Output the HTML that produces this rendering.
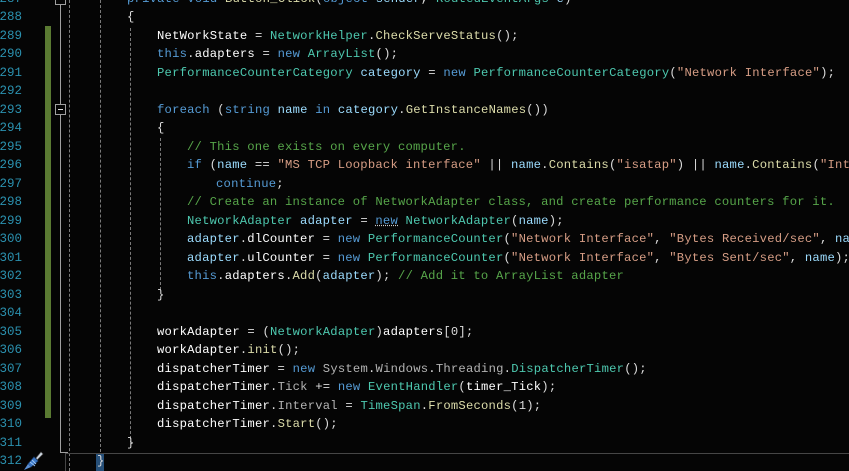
<!DOCTYPE html>
<html><head><meta charset="utf-8"><style>
html,body{margin:0;padding:0;background:#050505;width:849px;height:471px;overflow:hidden;position:relative}
.r{position:absolute;left:0;height:18.5px;line-height:18.5px;white-space:pre;font-family:"Liberation Mono",monospace;font-size:12.2px;letter-spacing:0.22px;color:#dcdcdc}
.n{position:absolute;left:-3px;width:25px;text-align:right;color:#2b91af;font-family:"Liberation Mono",monospace;font-size:12.5px;line-height:18.5px;height:18.5px}
.k{color:#569cd6}.t{color:#4ec9b0}.s{color:#d69d85}.g{color:#57a64a}.m{color:#dcdcaa}.v{color:#9cdcfe}.w{color:#ffffff}.p{color:#b4b4b4}
.dg{position:absolute;width:0;border-left:1px dashed #7a7a7a}
</style></head><body>
<div style="position:absolute;left:45px;top:26px;width:6px;height:392px;background:#5a7a32"></div>
<div style="position:absolute;left:60px;top:0;width:1px;height:452px;background:#a0a0a0"></div>
<div style="position:absolute;left:60px;top:452px;width:8px;height:1px;background:#a0a0a0"></div>
<div style="position:absolute;left:55px;top:-6px;width:9px;height:9px;border:1px solid #a0a0a0;background:#050505"></div>
<div style="position:absolute;left:55px;top:104px;width:9px;height:9px;border:1px solid #a0a0a0;background:#050505"></div>
<div style="position:absolute;left:58px;top:109px;width:5px;height:1px;background:#ddd"></div>
<div class="dg" style="left:69px;top:0;height:471px"></div>
<div class="dg" style="left:100px;top:0;height:452px"></div>
<div class="dg" style="left:130px;top:28px;height:416px"></div>
<div class="dg" style="left:160px;top:138px;height:152px"></div>
<div style="position:absolute;left:65px;top:453px;width:800px;height:20px;border:1px solid #464646;box-sizing:border-box"></div>
<div style="position:absolute;left:96px;top:454px;width:8px;height:17px;background:#264f78"></div>

<div id="code"></div>
<script>
var L=[
[287,127,'<span class="k">private</span> <span class="k">void</span> <span class="m">Button_Click</span>(<span class="k">object</span> <span class="v">sender</span>, <span class="t">RoutedEventArgs</span> <span class="v">e</span>)'],
[288,127,'{'],
[289,157,'<span class="w">NetWorkState</span> = <span class="t">NetworkHelper</span>.<span class="m">CheckServeStatus</span>();'],
[290,157,'<span class="k">this</span>.<span class="w">adapters</span> = <span class="k">new</span> <span class="t">ArrayList</span>();'],
[291,157,'<span class="t">PerformanceCounterCategory</span> <span class="v">category</span> = <span class="k">new</span> <span class="t">PerformanceCounterCategory</span>(<span class="s">"Network Interface"</span>);'],
[292,157,''],
[293,157,'<span class="k">foreach</span> (<span class="k">string</span> <span class="v">name</span> <span class="k">in</span> <span class="v">category</span>.<span class="m">GetInstanceNames</span>())'],
[294,157,'{'],
[295,187,'<span class="g">// This one exists on every computer.</span>'],
[296,187,'<span class="k">if</span> (<span class="v">name</span> == <span class="s">"MS TCP Loopback interface"</span> || <span class="v">name</span>.<span class="m">Contains</span>(<span class="s">"isatap"</span>) || <span class="v">name</span>.<span class="m">Contains</span>(<span class="s">"Int</span>'],
[297,216,'<span class="k">continue</span>;'],
[298,187,'<span class="g">// Create an instance of NetworkAdapter class, and create performance counters for it.</span>'],
[299,187,'<span class="t">NetworkAdapter</span> <span class="v">adapter</span> = <span class="k" style="text-decoration:underline dotted #ccc">new</span> <span class="t">NetworkAdapter</span>(<span class="v">name</span>);'],
[300,187,'<span class="v">adapter</span>.<span class="w">dlCounter</span> = <span class="k">new</span> <span class="t">PerformanceCounter</span>(<span class="s">"Network Interface"</span>, <span class="s">"Bytes Received/sec"</span>, <span class="v">na</span>'],
[301,187,'<span class="v">adapter</span>.<span class="w">ulCounter</span> = <span class="k">new</span> <span class="t">PerformanceCounter</span>(<span class="s">"Network Interface"</span>, <span class="s">"Bytes Sent/sec"</span>, <span class="v">name</span>);'],
[302,187,'<span class="k">this</span>.<span class="w">adapters</span>.<span class="m">Add</span>(<span class="v">adapter</span>); <span class="g">// Add it to ArrayList adapter</span>'],
[303,157,'}'],
[304,157,''],
[305,157,'<span class="w">workAdapter</span> = (<span class="t">NetworkAdapter</span>)<span class="w">adapters</span>[0];'],
[306,157,'<span class="w">workAdapter</span>.<span class="m">init</span>();'],
[307,157,'<span class="w">dispatcherTimer</span> = <span class="k">new</span> <span class="p">System</span>.<span class="p">Windows</span>.<span class="p">Threading</span>.<span class="t">DispatcherTimer</span>();'],
[308,157,'<span class="w">dispatcherTimer</span>.<span class="p">Tick</span> += <span class="k">new</span> <span class="t">EventHandler</span>(<span class="w">timer_Tick</span>);'],
[309,157,'<span class="w">dispatcherTimer</span>.<span class="p">Interval</span> = <span class="t">TimeSpan</span>.<span class="m">FromSeconds</span>(1);'],
[310,157,'<span class="w">dispatcherTimer</span>.<span class="m">Start</span>();'],
[311,127,'}'],
[312,97,'}']
];
var h='';
L.forEach(function(l,i){
 var top=(-10.25+i*18.5).toFixed(2);
 h+='<div class="n" style="top:'+top+'px">'+l[0]+'</div>';
 h+='<div class="r" style="top:'+top+'px;left:'+l[1]+'px">'+l[2]+'</div>';
});
document.getElementById('code').innerHTML=h;
</script>
<svg style="position:absolute;left:22px;top:450px" width="22" height="21" viewBox="0 0 22 21">
<path d="M14 8 L19 2 L21 4 L15 10 Z" fill="#cfd8e3" stroke="#555" stroke-width="0.6"/>
<path d="M6 14 L12 7 L16 11 L9 17 Z" fill="#3a78c8" stroke="#1d3f70" stroke-width="0.8"/>
<path d="M8 12 L13 16 M10 10 L14 14" stroke="#9cc3f0" stroke-width="1"/>
<path d="M2 20 L6 14 L9 17 Z" fill="#5b8fd4"/>
</svg>
</body></html>
